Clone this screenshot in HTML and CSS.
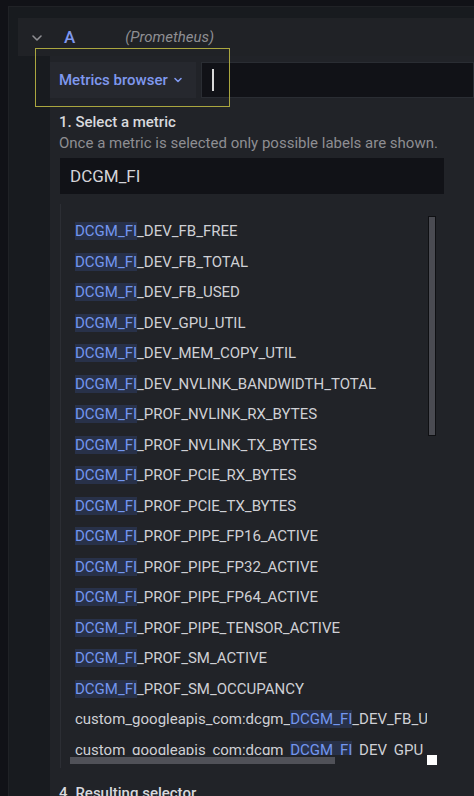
FILE: index.html
```html
<!DOCTYPE html>
<html>
<head>
<meta charset="utf-8">
<link rel="stylesheet" href="styles.css">
</head>
<body>
<div class="panel">
  <div class="row-header">
    <svg class="chev" width="12" height="8" viewBox="0 0 12 8"><path d="M2 2 L6 6 L10 2" fill="none" stroke="#8e8e92" stroke-width="1.6" stroke-linecap="round" stroke-linejoin="round"/></svg>
    <span class="ref-id">A</span>
    <span class="ds">(Prometheus)</span>
  </div>
  <div class="row-body">
    <div class="content">
      <div class="toolbar">
        <div class="mb-btn">Metrics browser
          <svg width="10" height="8" viewBox="0 0 10 8"><path d="M2 2.5 L5 5.5 L8 2.5" fill="none" stroke="#7f98ee" stroke-width="1.6" stroke-linecap="round" stroke-linejoin="round"/></svg>
        </div>
        <div class="query"><span class="cursor"></span></div>
      </div>
      <div class="section">
        <div class="title">1. Select a metric</div>
        <div class="desc">Once a metric is selected only possible labels are shown.</div>
        <div class="search">DCGM_FI</div>
        <div class="list">
          <div class="viewport">
            <div class="item"><span class="hl">DCGM_FI</span>_DEV_FB_FREE</div>
            <div class="item"><span class="hl">DCGM_FI</span>_DEV_FB_TOTAL</div>
            <div class="item"><span class="hl">DCGM_FI</span>_DEV_FB_USED</div>
            <div class="item"><span class="hl">DCGM_FI</span>_DEV_GPU_UTIL</div>
            <div class="item"><span class="hl">DCGM_FI</span>_DEV_MEM_COPY_UTIL</div>
            <div class="item"><span class="hl">DCGM_FI</span>_DEV_NVLINK_BANDWIDTH_TOTAL</div>
            <div class="item"><span class="hl">DCGM_FI</span>_PROF_NVLINK_RX_BYTES</div>
            <div class="item"><span class="hl">DCGM_FI</span>_PROF_NVLINK_TX_BYTES</div>
            <div class="item"><span class="hl">DCGM_FI</span>_PROF_PCIE_RX_BYTES</div>
            <div class="item"><span class="hl">DCGM_FI</span>_PROF_PCIE_TX_BYTES</div>
            <div class="item"><span class="hl">DCGM_FI</span>_PROF_PIPE_FP16_ACTIVE</div>
            <div class="item"><span class="hl">DCGM_FI</span>_PROF_PIPE_FP32_ACTIVE</div>
            <div class="item"><span class="hl">DCGM_FI</span>_PROF_PIPE_FP64_ACTIVE</div>
            <div class="item"><span class="hl">DCGM_FI</span>_PROF_PIPE_TENSOR_ACTIVE</div>
            <div class="item"><span class="hl">DCGM_FI</span>_PROF_SM_ACTIVE</div>
            <div class="item"><span class="hl">DCGM_FI</span>_PROF_SM_OCCUPANCY</div>
            <div class="item">custom_googleapis_com:dcgm_<span class="hl">DCGM_FI</span>_DEV_FB_U</div>
            <div class="item">custom_googleapis_com:dcgm_<span class="hl">DCGM_FI</span>_DEV_GPU</div>
          </div>
          <div class="vtrack"><div class="vthumb"></div></div>
          <div class="htrack"><div class="hthumb"></div></div>
          <div class="corner"><span class="corner-box"></span></div>
        </div>
        <div class="title title-4">4. Resulting selector</div>
      </div>
    </div>
  </div>
  <div class="annot"></div>
</div>
</body>
</html>
```

FILE: styles.css
```css
html, body {
  margin: 0;
  padding: 0;
  background: #111217;
  overflow: hidden;
  height: 796px;
}
body {
  font-family: Roboto, "Liberation Sans", sans-serif;
  color: #ccccdc;
  font-size: 15px;
}
.panel {
  position: relative;
  margin: 6px 0 0 8px;
  padding: 11px 0 0 12px;
  background: #181b1f;
  border-top: 1px solid #202226;
  border-left: 1px solid #202226;
  height: 800px;
}
.row-header {
  height: 38px;
  background: #202226;
  display: flex;
  align-items: center;
  margin-left: -3px;
  padding-left: 13px;
}
.chev { margin-top: 1px; }
.ref-id {
  margin-left: 21px;
  color: #7f98ee;
  font-weight: 500;
  font-size: 17px;
}
.ds {
  margin-left: 50px;
  color: #8e8e92;
  font-style: italic;
  font-size: 15px;
}
.row-body {
  padding-left: 29px;
}
.content {
  background: #212328;
  padding-top: 6px;
  min-height: 760px;
}
.toolbar {
  display: flex;
  gap: 5px;
  height: 36px;
}
.mb-btn {
  width: 146px;
  flex: none;
  box-sizing: border-box;
  background: #26282e;
  color: #7f98ee;
  font-weight: 500;
  font-size: 15px;
  display: flex;
  align-items: center;
  padding-left: 9px;
  gap: 5px;
}
.query {
  flex: 1;
  background: #111217;
  border: 1px solid #2a2d33;
  display: flex;
  align-items: center;
  padding-left: 10px;
}
.cursor {
  width: 2px;
  height: 22px;
  background: #d8d8d8;
}
.section {
  padding-left: 9px;
}
.title {
  margin-top: 15px;
  font-weight: 500;
  font-size: 15px;
  line-height: 18px;
  color: #d8d9dd;
}
.desc {
  font-size: 15px;
  line-height: 18px;
  color: #8e8e92;
  margin-top: 3px;
}
.search {
  margin-top: 6px;
  width: 384px;
  height: 36px;
  box-sizing: border-box;
  margin-left: 1px;
  background: #111217;
  font-size: 17px;
  color: #d4d4d8;
  display: flex;
  align-items: center;
  padding-left: 10px;
}
.list {
  margin-top: 10px;
  margin-left: 1px;
  border-left: 1px solid #2c2e34;
  padding: 10px 0 3px 8px;
  width: 368px;
  display: grid;
  grid-template-columns: 358px 10px;
  grid-template-rows: 541px 10px;
}
.viewport {
  overflow: hidden;
  padding-top: 2px;
  box-sizing: border-box;
}
.item {
  line-height: 30.5px;
  height: 30.5px;
  padding-left: 6px;
  white-space: nowrap;
  font-size: 15px;
  color: #cfd0d5;
}
.hl {
  color: #7396ef;
  background: #283149;
}
.vtrack { display: flex; justify-content: center; }
.vthumb {
  margin-top: 2px;
  width: 8px;
  height: 220px;
  background: #4a4b52;
  border: 1px solid #0f1013;
  box-sizing: border-box;
}
.htrack { display: flex; align-items: center; }
.hthumb {
  margin-left: 1px;
  width: 265px;
  height: 7px;
  background: #505158;
}
.corner { display: flex; align-items: flex-start; justify-content: center; }
.corner-box {
  width: 10px;
  height: 10px;
  background: #ffffff;
}
.title-4 {
  margin-top: 16px;
}
.annot {
  position: absolute;
  left: 26px;
  top: 41px;
  width: 193px;
  height: 57px;
  border: 1px solid #aaa63f;
  pointer-events: none;
}
```
